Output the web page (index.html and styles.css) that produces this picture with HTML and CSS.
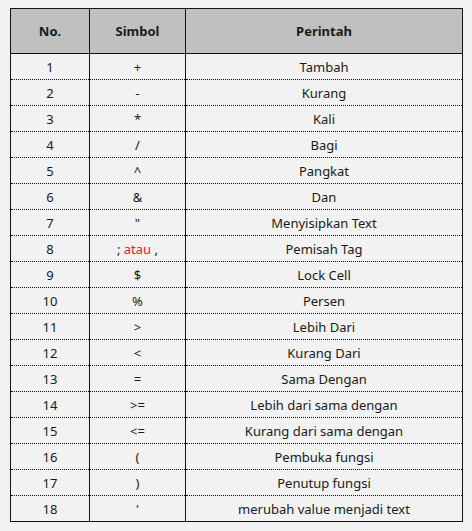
FILE: index.html
```html
<!DOCTYPE html>
<html>
<head>
<meta charset="utf-8">
<link rel="stylesheet" href="styles.css">
</head>
<body>
<table class="ops">
  <colgroup><col class="c-no"><col class="c-sym"><col class="c-cmd"></colgroup>
  <thead>
    <tr><th>No.</th><th>Simbol</th><th>Perintah</th></tr>
  </thead>
  <tbody>
    <tr><td>1</td><td>+</td><td>Tambah</td></tr>
    <tr><td>2</td><td>-</td><td>Kurang</td></tr>
    <tr><td>3</td><td>*</td><td>Kali</td></tr>
    <tr><td>4</td><td>/</td><td>Bagi</td></tr>
    <tr><td>5</td><td>^</td><td>Pangkat</td></tr>
    <tr><td>6</td><td>&amp;</td><td>Dan</td></tr>
    <tr><td>7</td><td>"</td><td>Menyisipkan Text</td></tr>
    <tr><td>8</td><td>; <span class="red">atau</span> ,</td><td>Pemisah Tag</td></tr>
    <tr><td>9</td><td>$</td><td>Lock Cell</td></tr>
    <tr><td>10</td><td>%</td><td>Persen</td></tr>
    <tr><td>11</td><td>&gt;</td><td>Lebih Dari</td></tr>
    <tr><td>12</td><td>&lt;</td><td>Kurang Dari</td></tr>
    <tr><td>13</td><td>=</td><td>Sama Dengan</td></tr>
    <tr><td>14</td><td>&gt;=</td><td>Lebih dari sama dengan</td></tr>
    <tr><td>15</td><td>&lt;=</td><td>Kurang dari sama dengan</td></tr>
    <tr><td>16</td><td>(</td><td>Pembuka fungsi</td></tr>
    <tr><td>17</td><td>)</td><td>Penutup fungsi</td></tr>
    <tr><td>18</td><td>'</td><td>merubah value menjadi text</td></tr>
  </tbody>
</table>
</body>
</html>
```
FILE: styles.css
```css
html, body {
  margin: 0;
  background: #f2f2f2;
}
body {
  padding: 8px 0 0 10px;
  font-family: "Noto Sans", "Open Sans", sans-serif;
  font-size: 13px;
  color: #1a1a1a;
}
.ops {
  border-collapse: collapse;
  table-layout: fixed;
  width: 452px;
  border: 1px solid #111;
}
.c-no { width: 79px; }
.c-sym { width: 96px; }
.c-cmd { width: 277px; }
.ops th, .ops td {
  text-align: center;
  padding: 0;
  border-left: 1px solid #111;
  border-right: 1px solid #111;
}
.ops th {
  background: #c0c0c0;
  height: 44px;
  font-weight: bold;
  border-bottom: 1px solid #111;
}
.ops td {
  height: 25px;
  border-bottom: 1px dotted #111;
}
.ops tbody tr:last-child td {
  border-bottom: 1px solid #111;
}
.red { color: #e8192c; }
```
